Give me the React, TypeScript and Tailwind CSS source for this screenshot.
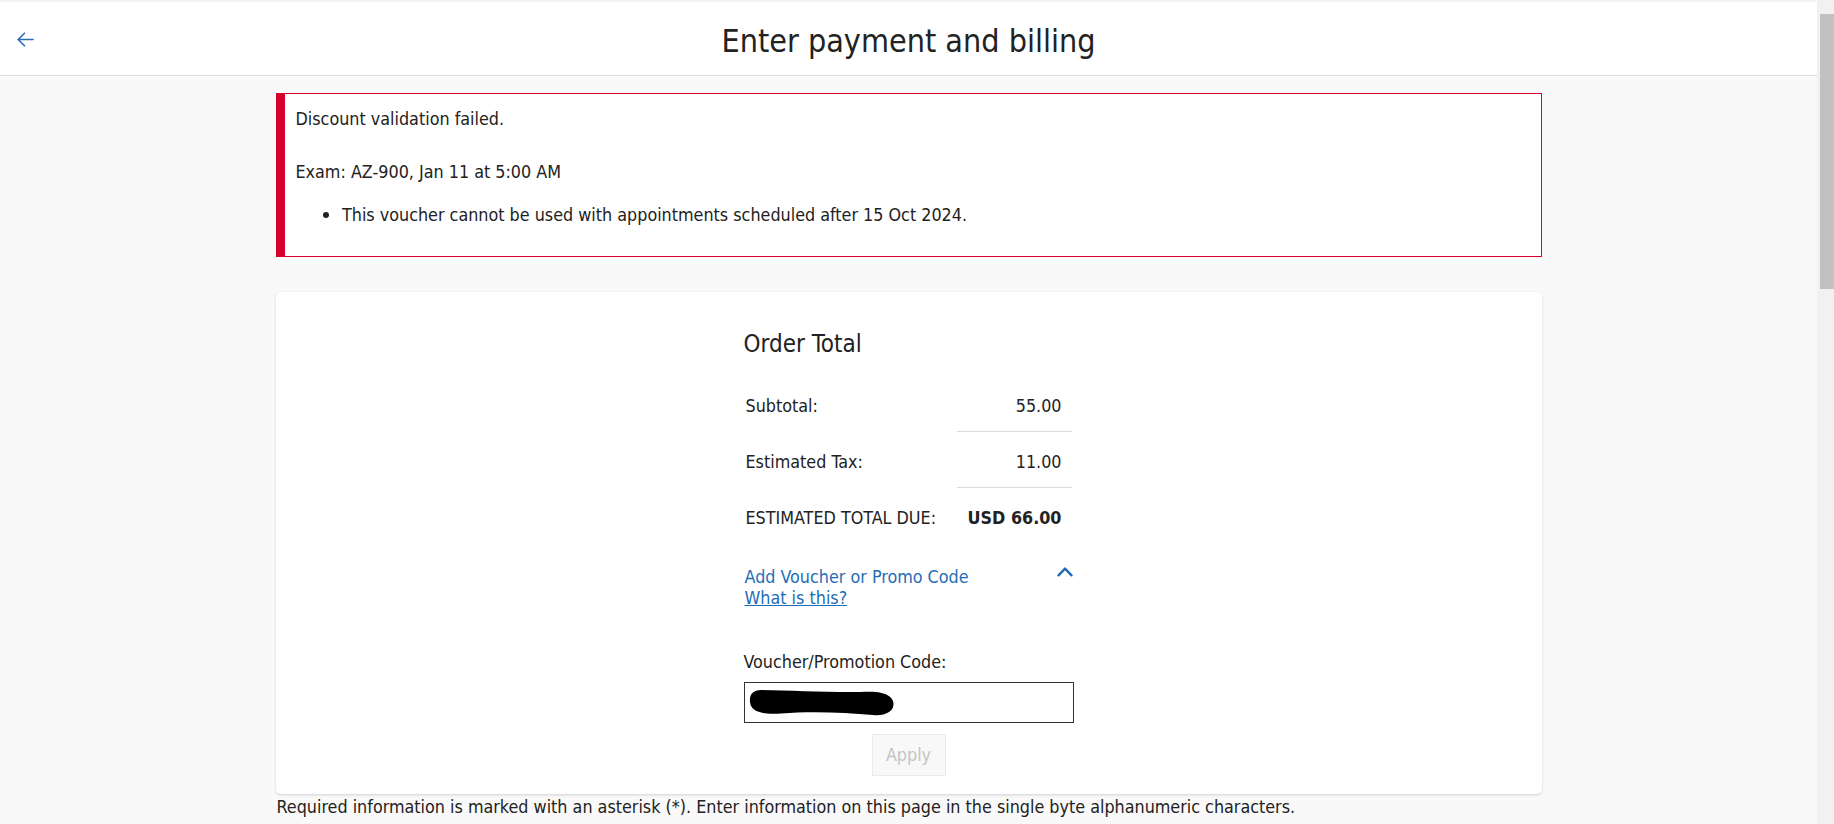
import React from "react";

function BackArrow() {
  return (
    <svg width="17" height="15" viewBox="0 0 17 15" fill="none" stroke="#2a6db5" strokeWidth="1.6" strokeLinecap="round" strokeLinejoin="round">
      <path d="M16 7.5H1.2" />
      <path d="M7.5 1.2L1.2 7.5L7.5 13.8" />
    </svg>
  );
}

function ChevronUp() {
  return (
    <svg width="16" height="10" viewBox="0 0 16 10" fill="none" stroke="#1f6db6" strokeWidth="2.4" strokeLinecap="round" strokeLinejoin="round">
      <path d="M1.5 8.3L8 1.6L14.5 8.3" />
    </svg>
  );
}

function Redaction() {
  return (
    <svg width="147" height="27" viewBox="0 0 147 27">
      <path
        d="M12 1 C40 1.5 80 3.5 112 3 C124 2.5 140 2.5 144 12 C147 22 136 27.5 124 26 C96 23.5 62 22 32 24.5 C18 25.5 2 24.5 1 13 C0 4 6 1 12 1 Z"
        fill="#000"
      />
    </svg>
  );
}

function Row({ label, value, bold, divider }: { label: string; value: string; bold?: boolean; divider?: boolean }) {
  return (
    <div className="flex h-[56px]">
      <div className="w-[213px] pl-[2px] pt-[17px] leading-[26px]">{label}</div>
      <div
        className={
          "w-[115px] pr-[10px] pt-[17px] text-right leading-[26px] " +
          (divider ? "border-b border-[#dcdcdc] " : "") +
          (bold ? "font-bold" : "")
        }
      >
        {value}
      </div>
    </div>
  );
}

export default function App() {
  return (
    <div className="flex h-screen w-full overflow-hidden bg-[#f9f9f9] font-[family-name:'DejaVu_Sans_Condensed','DejaVu_Sans',sans-serif] text-[17.8px] text-[#222]">
      <div className="flex min-w-0 flex-1 flex-col">
        <header className="grid h-[76px] shrink-0 grid-cols-[1fr_auto_1fr] border-t-2 border-b border-t-[#f4f4f4] border-b-[#e0e0e0] bg-white">
          <div className="pl-[17px] pt-[30px]">
            <BackArrow />
          </div>
          <h1 className="pt-[18.6px] text-[32px] font-normal leading-[40px] text-[#222]">
            Enter payment and billing
          </h1>
          <div />
        </header>

        <main className="flex flex-col items-center">
          <div className="w-[1266px]">
            <div className="mt-[17px] border border-l-[9px] border-[#d6002a] bg-white pb-[28.4px] pl-[11px] pt-[12px]">
              <p className="leading-[26px]">Discount validation failed.</p>
              <p className="mt-[27.3px] leading-[26px]">Exam: AZ-900, Jan 11 at 5:00 AM</p>
              <ul className="mt-[16.4px]">
                <li className="flex items-start leading-[26px]">
                  <span className="ml-[27.5px] mt-[10.7px] h-[6px] w-[6px] shrink-0 rounded-full bg-[#222]" />
                  <span className="ml-[13px]">
                    This voucher cannot be used with appointments scheduled after 15 Oct 2024.
                  </span>
                </li>
              </ul>
            </div>

            <div className="mt-[35px] flex h-[502px] flex-col items-center rounded-[5px] bg-white pt-[37px] shadow-[0_1px_3px_rgba(0,0,0,0.16)]">
              <div className="w-[330px]">
                <h2 className="text-[24px] font-normal leading-[30px]">Order Total</h2>
                <div className="mt-[17px]">
                  <Row label="Subtotal:" value="55.00" divider />
                  <Row label="Estimated Tax:" value="11.00" divider />
                  <Row label="ESTIMATED TOTAL DUE:" value="USD 66.00" bold />
                </div>

                <div className="mt-[22.2px] flex items-start justify-between text-[#1f6db6]">
                  <div className="leading-[21px]">
                    <div className="pl-[1px]">Add Voucher or Promo Code</div>
                    <div className="pl-[1px] underline">What is this?</div>
                  </div>
                  <div className="mr-[1px] mt-[1px]">
                    <ChevronUp />
                  </div>
                </div>

                <div className="mt-[41.2px] leading-[26px]">Voucher/Promotion Code:</div>
                <div className="mt-[6.4px] flex h-[41.4px] items-center border border-[#333] pl-[4px]">
                  <Redaction />
                </div>
                <div className="mt-[11px] flex justify-center">
                  <div className="flex h-[42px] w-[74px] items-center justify-center border border-[#ebebeb] bg-[#f8f8f8] leading-[26px] text-[#c4c4c4]">
                    Apply
                  </div>
                </div>
              </div>
            </div>

            <p className="pl-[1px] leading-[26px]">
              Required information is marked with an asterisk (*). Enter information on this page in the single byte alphanumeric characters.
            </p>
          </div>
        </main>
      </div>
      <div className="w-[17px] shrink-0 bg-[#f1f1f1] pl-[3px] pt-[14px]">
        <div className="h-[275px] w-[14px] bg-[#c1c1c1]" />
      </div>
    </div>
  );
}
